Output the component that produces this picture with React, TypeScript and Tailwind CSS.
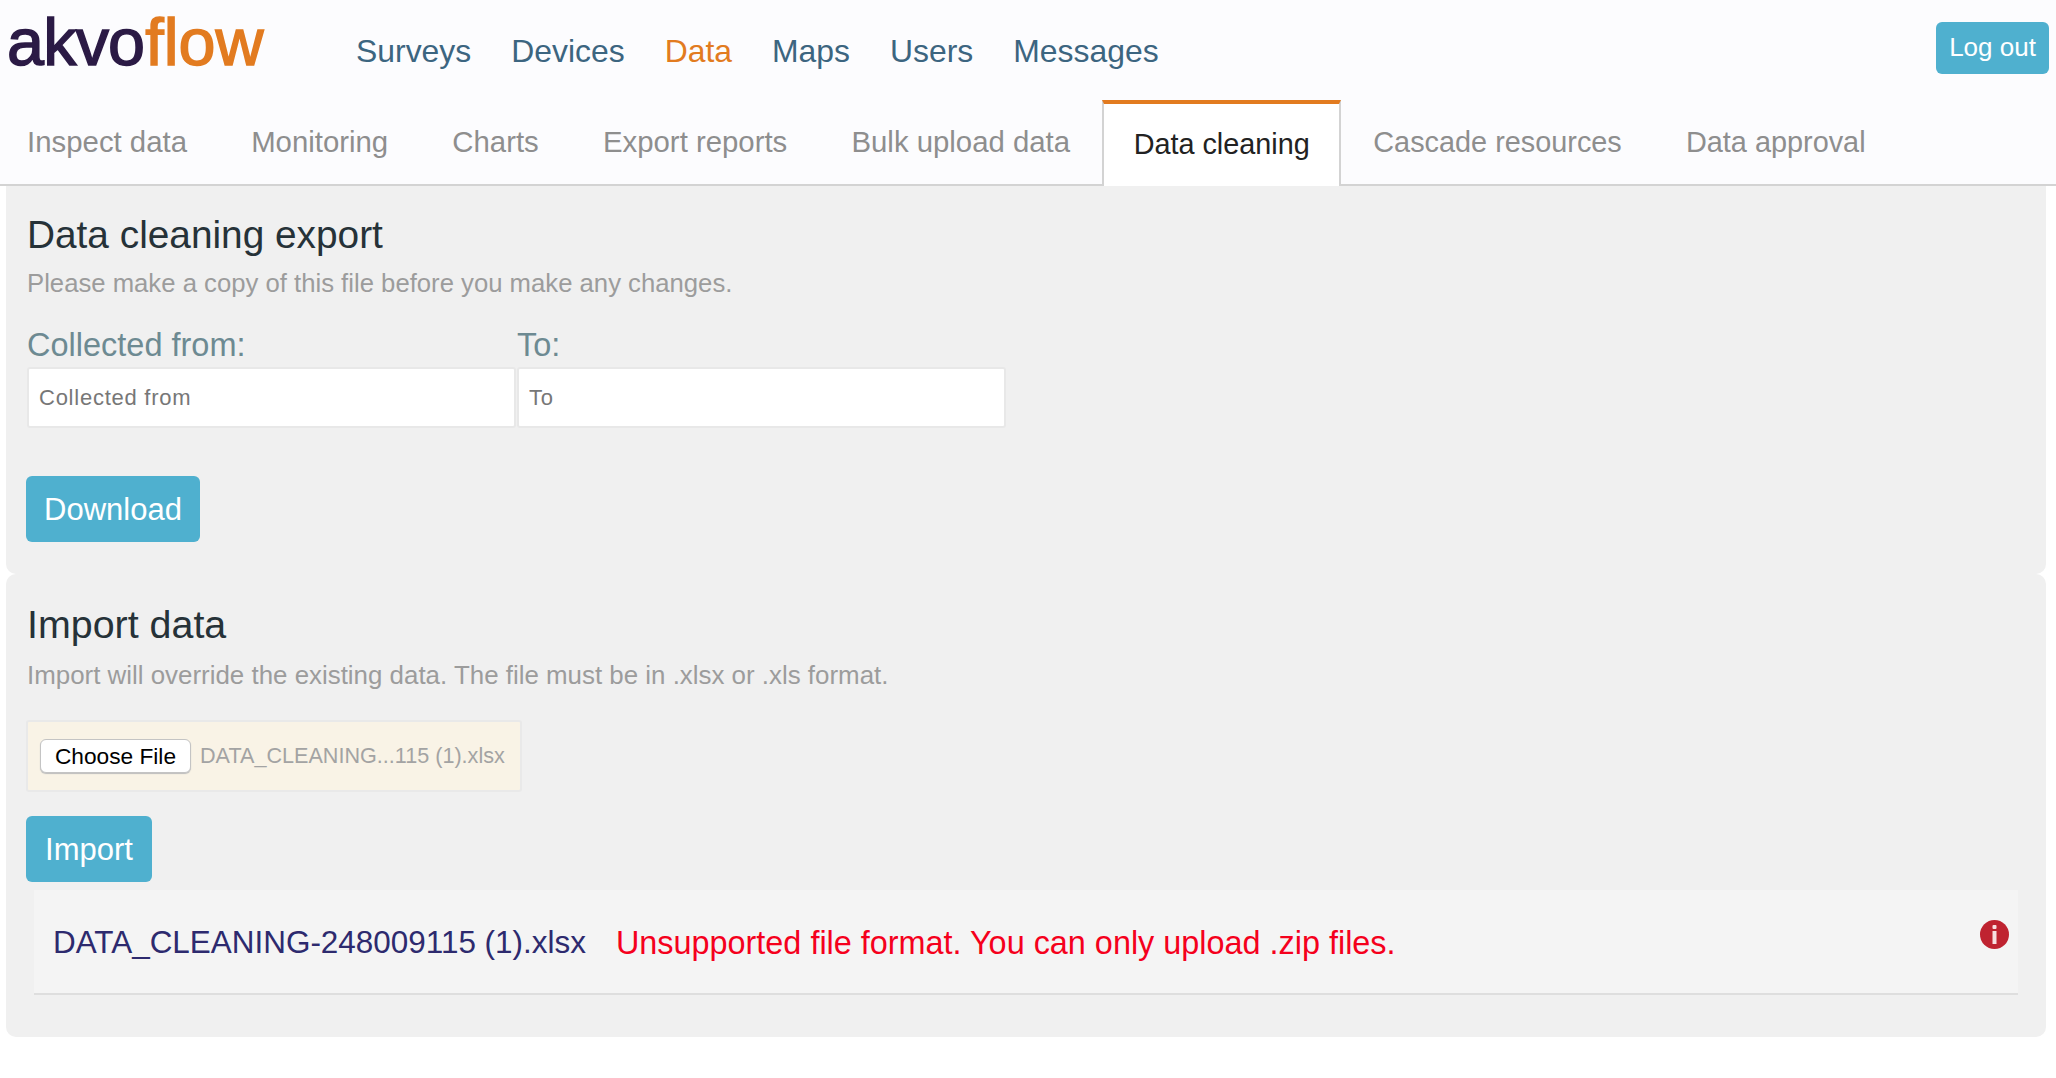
const navItems = ["Surveys", "Devices", "Data", "Maps", "Users", "Messages"];
const tabs = [
  "Inspect data",
  "Monitoring",
  "Charts",
  "Export reports",
  "Bulk upload data",
  "Data cleaning",
  "Cascade resources",
  "Data approval",
];

function BlueButton({ label, className }: { label: string; className: string }) {
  return (
    <button className={`block rounded-[6px] bg-[#4fb0cf] text-center text-[31px] leading-none text-white ${className}`}>
      {label}
    </button>
  );
}

export default function App() {
  return (
    <div className="min-h-screen bg-white [font-family:'Liberation_Sans',Arial,sans-serif]">
      {/* Header */}
      <div className="bg-[#fcfcfe]">
        <div className="flex h-[100px] items-start pl-[7px] pr-[7px]">
          <div className="mt-[4px] w-[349px] whitespace-nowrap text-[66.5px] leading-[76px] [-webkit-text-stroke:1.5px_currentColor]">
            <span className="tracking-[-0.8px] text-[#2b1a45]">akvo</span>
            <span className="ml-[1px] text-[#e27b20]">flow</span>
          </div>
          <nav className="mt-[31px] flex gap-[40px] text-[31.9px] leading-[40px]">
            {navItems.map((item) => (
              <span key={item} className={item === "Data" ? "text-[#e27b20]" : "text-[#3c6580]"}>
                {item}
              </span>
            ))}
          </nav>
          <button className="mt-[22px] ml-auto h-[52px] w-[113px] rounded-[6px] bg-[#4fb0cf] pb-[2px] text-[26px] text-white">
            Log out
          </button>
        </div>

        {/* Tabs */}
        <div className="flex h-[86px] items-stretch border-b-2 border-[#d3d3d3]">
          {tabs.map((tab, index) =>
            tab === "Data cleaning" ? (
              <div
                key={tab}
                className="z-10 -mb-[2px] flex h-[86px] w-[239px] items-start justify-center border-x-2 border-t-4 border-x-[#d3d3d3] border-t-[#e27b20] bg-white pt-[22px] text-[28.8px] leading-[36px] text-[#222222]"
              >
                {tab}
              </div>
            ) : (
              <div
                key={tab}
                className={`px-[32.1px] pt-[24px] leading-[36px] whitespace-nowrap text-[#8e8e8e] first:ml-[-5px] ${
                  index > 5 ? "text-[28.85px]" : "text-[29.35px]"
                }`}
              >
                {tab}
              </div>
            ),
          )}
        </div>
      </div>

      {/* Export panel */}
      <div className="ml-[6px] mr-[10px] rounded-b-[10px] bg-[#f0f0f0] pt-[25px] pb-[32px] pl-[21px]">
        <h2 className="text-[38.8px] leading-[48px] text-[#263238]">Data cleaning export</h2>
        <p className="mt-[8px] text-[25.7px] leading-[32px] text-[#9c9c9c]">
          Please make a copy of this file before you make any changes.
        </p>
        <div className="mt-[28px] flex gap-[1px]">
          {["Collected from", "To"].map((name) => (
            <label key={name} className="block w-[489px]">
              <span className="block text-[32.5px] leading-[36px] text-[#6d8a92]">{name}:</span>
              <input
                placeholder={name}
                className="mt-[4px] block h-[61px] w-full rounded-[3px] border-2 border-[#e8e8e8] bg-white pl-[10px] text-[22px] tracking-[0.75px] outline-none placeholder:text-[#777777]"
              />
            </label>
          ))}
        </div>
        <BlueButton label="Download" className="ml-[-1px] mt-[48px] h-[66px] w-[174px]" />
      </div>

      {/* Import panel */}
      <div className="ml-[6px] mr-[10px] rounded-[10px] bg-[#f0f0f0] pt-[26px] pb-[42px] pl-[21px] pr-[28px]">
        <h2 className="text-[39.4px] leading-[48px] text-[#263238]">Import data</h2>
        <p className="mt-[11px] text-[25.9px] leading-[32px] text-[#9c9c9c]">
          Import will override the existing data. The file must be in .xlsx or .xls format.
        </p>
        <div className="ml-[-1px] mt-[29px] flex h-[72px] w-[496px] items-center rounded-[3px] border-2 border-[#e9e9e9] bg-[#f9f3e6] pl-[12px]">
          <span className="flex h-[34px] w-[151px] items-center justify-center rounded-[6px] border border-[#c4c4c4] bg-white text-[22.7px] text-black shadow-[0_1px_1px_#bdbdbd]">
            Choose File
          </span>
          <span className="ml-[9px] whitespace-nowrap text-[21.6px] text-[#a3a3a3]">DATA_CLEANING...115 (1).xlsx</span>
        </div>
        <BlueButton label="Import" className="ml-[-1px] mt-[24px] h-[66px] w-[126px]" />
        <div className="relative ml-[7px] mt-[8px] flex h-[105px] items-center border-b-2 border-[#dedede] bg-[#f4f4f4] pt-[2px] pl-[19px] leading-[40px]">
          <span className="whitespace-nowrap text-[31.45px] text-[#2d2a6e]">DATA_CLEANING-248009115 (1).xlsx</span>
          <span className="ml-[30px] whitespace-nowrap text-[32.4px] text-[#f5001c]">Unsupported file format. You can only upload .zip files.</span>
          <svg viewBox="0 0 29 29" className="absolute right-[9px] top-[30px] h-[29px] w-[29px]">
            <circle cx="14.5" cy="14.5" r="14.5" fill="#bf2330" />
            <rect x="12.5" y="5" width="4" height="4" rx="1" fill="#f7dfe0" />
            <rect x="12.5" y="11" width="4" height="13" fill="#f7dfe0" />
          </svg>
        </div>
      </div>
    </div>
  );
}
